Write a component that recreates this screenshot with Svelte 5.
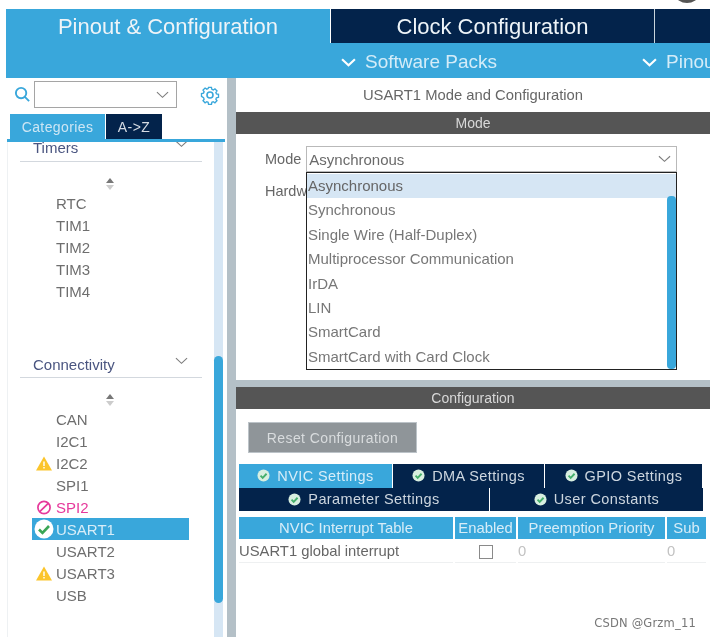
<script>
  const timers = ['RTC', 'TIM1', 'TIM2', 'TIM3', 'TIM4'];
  const connectivity = [
    { name: 'CAN' },
    { name: 'I2C1' },
    { name: 'I2C2', status: 'warn' },
    { name: 'SPI1' },
    { name: 'SPI2', status: 'blocked' },
    { name: 'USART1', status: 'ok' },
    { name: 'USART2' },
    { name: 'USART3', status: 'warn' },
    { name: 'USB' }
  ];
  const modes = [
    'Asynchronous',
    'Synchronous',
    'Single Wire (Half-Duplex)',
    'Multiprocessor Communication',
    'IrDA',
    'LIN',
    'SmartCard',
    'SmartCard with Card Clock'
  ];
</script>

{#snippet chevron(cls)}
  <svg class={cls} viewBox="0 0 14 8" fill="none"><path d="M1 1l6 5.5L13 1" /></svg>
{/snippet}

{#snippet sorter()}
  <svg class="sorter" viewBox="0 0 10 12"><path d="M5 0l4 5H1z" fill="#777" /><path d="M1 7h8l-4 5z" fill="#ccc" /></svg>
{/snippet}

{#snippet tick()}
  <svg class="tick" viewBox="0 0 14 14"><circle cx="7" cy="7" r="6.5" fill="#d8efe0" /><path d="M3.8 7.2l2.3 2.3 4.2-4.4" fill="none" stroke="#46b06c" stroke-width="2" /></svg>
{/snippet}

<div class="page">
  <div class="corner"></div>

  <header>
    <div class="tabs">
      <div class="tab active">Pinout &amp; Configuration</div>
      <div class="tab clock">Clock Configuration</div>
      <div class="tab rest"></div>
    </div>
    <div class="subbar">
      <span class="sub packs">{@render chevron('sub-chev')}Software Packs</span>
      <span class="sub pinout">{@render chevron('sub-chev')}Pinout</span>
    </div>
  </header>

  <main>
    <aside>
      <div class="search">
        <svg class="lens" viewBox="0 0 18 18" fill="none"><circle cx="7.5" cy="7.5" r="5.5" /><path d="M11.5 11.5L16 16" /></svg>
        <div class="searchbox">{@render chevron('chev')}</div>
        <svg class="gear" viewBox="0 0 20 20" fill="none">
          <path d="M8.3 1h3.4l.5 2.4 1.6.7 2-1.3 2.4 2.4-1.3 2 .7 1.6 2.4.5v3.4l-2.4.5-.7 1.6 1.3 2-2.4 2.4-2-1.3-1.6.7-.5 2.4H8.300l-.5-2.400-1.600-.7-2 1.300-2.400-2.400 1.300-2-.7-1.600L0 11.700V8.300l2.400-.5.7-1.600-1.300-2 2.400-2.400 2 1.300 1.600-.7z" transform="translate(1.500 1.500) scale(.85)" />
          <circle cx="10" cy="10" r="3" />
        </svg>
      </div>
      <div class="cat-tabs">
        <div class="cat on">Categories</div>
        <div class="cat off">A-&gt;Z</div>
      </div>
      <div class="cat-line"></div>
      <div class="listwrap">
        <div class="list">
          <div class="group first"><span>Timers</span>{@render chevron('chev')}</div>
          {@render sorter()}
          <ul class="items">
            {#each timers as t}
              <li><span class="ico"></span><span>{t}</span></li>
            {/each}
          </ul>
          <div class="group second"><span>Connectivity</span>{@render chevron('chev')}</div>
          {@render sorter()}
          <ul class="items">
            {#each connectivity as c}
              <li class:selected={c.status === 'ok'} class:blocked={c.status === 'blocked'}>
                <span class="ico">
                  {#if c.status === 'warn'}
                    <svg viewBox="0 0 16 14"><path d="M8 0l8 14H0z" fill="#fbc52c" /><path d="M8 5v4.500M8 10.500v1.500" stroke="#fff" stroke-width="1.400" /></svg>
                  {:else if c.status === 'blocked'}
                    <svg viewBox="0 0 16 16" fill="none" stroke="#e6399b" stroke-width="1.800"><circle cx="8" cy="8" r="6.500" /><path d="M3.500 12.500l9-9" /></svg>
                  {:else if c.status === 'ok'}
                    <svg class="big" viewBox="0 0 20 20"><circle cx="10" cy="10" r="9.500" fill="#fff" /><path d="M5 10.500l3.500 3.500L15 7" fill="none" stroke="#3aa655" stroke-width="2.600" /></svg>
                  {/if}
                </span>
                <span>{c.name}</span>
              </li>
            {/each}
          </ul>
        </div>
        <div class="track"><div class="thumb"></div></div>
      </div>
    </aside>

    <div class="divider"></div>

    <section class="right">
      <div class="title">USART1 Mode and Configuration</div>
      <div class="bar">Mode</div>
      <div class="mode-panel">
        <div class="field">
          <span class="label">Mode</span>
          <div class="select"><span>Asynchronous</span>{@render chevron('chev')}</div>
        </div>
        <div class="field hw"><span class="label">Hardw</span></div>
        <div class="dropdown">
          <ul>
            {#each modes as m, i}
              <li class:hover={i === 0}>{m}</li>
            {/each}
          </ul>
          <div class="dd-thumb"></div>
        </div>
      </div>
      <div class="gap"></div>
      <div class="bar">Configuration</div>
      <div class="config">
        <button class="reset" type="button">Reset Configuration</button>
        <div class="set-row">
          <div class="set on w1">{@render tick()}NVIC Settings</div>
          <div class="set w2">{@render tick()}DMA Settings</div>
          <div class="set w3">{@render tick()}GPIO Settings</div>
        </div>
        <div class="set-row">
          <div class="set w4">{@render tick()}Parameter Settings</div>
          <div class="set w5">{@render tick()}User Constants</div>
        </div>
        <table>
          <thead>
            <tr>
              <th class="c1">NVIC Interrupt Table</th>
              <th class="c2">Enabled</th>
              <th class="c3">Preemption Priority</th>
              <th class="c4">Sub</th>
            </tr>
          </thead>
          <tbody>
            <tr>
              <td class="name">USART1 global interrupt</td>
              <td class="center"><span class="check"></span></td>
              <td class="zero">0</td>
              <td class="zero">0</td>
            </tr>
          </tbody>
        </table>
        <div class="mark">CSDN @Grzm_11</div>
      </div>
    </section>
  </main>
</div>

<style>
  :global(body) {
    margin: 0;
    background: #fff;
  }

  .page {
    position: relative;
    width: 710px;
    height: 637px;
    overflow: hidden;
    padding-top: 9px;
    box-sizing: border-box;
    font-family: "Liberation Sans", Arial, sans-serif;
    color: #666;
    background: #fff;
    filter: blur(0.4px);
  }

  .corner {
    position: absolute;
    top: -12px;
    left: 676px;
    width: 22px;
    height: 15px;
    border-radius: 50%;
    background: #555;
  }

  header {
    margin-left: 6px;
  }

  .tabs {
    display: flex;
    height: 34px;
  }

  .tab {
    display: flex;
    align-items: center;
    justify-content: center;
    font-size: 22px;
    color: #eef4f8;
    box-sizing: border-box;
    padding-top: 2px;
  }

  .active {
    width: 324px;
    background: #39a7db;
  }

  .clock {
    width: 324px;
    margin-left: 1px;
    border-right: 1px solid #c9d4dc;
    background: #03234b;
  }

  .rest {
    flex: 1;
    background: #03234b;
  }

  .subbar {
    display: flex;
    height: 35px;
    box-sizing: border-box;
    padding: 3px 0 0 335px;
    align-items: center;
    background: #39a7db;
    font-size: 19px;
    color: #d4ecf8;
  }

  .sub {
    display: flex;
    align-items: center;
    white-space: nowrap;
  }

  .packs {
    width: 301px;
    flex: none;
  }

  .sub-chev {
    width: 15px;
    height: 9px;
    margin-right: 9px;
    stroke: #fff;
    stroke-width: 2;
    flex: none;
  }

  main {
    display: flex;
    height: 559px;
  }

  aside {
    width: 227px;
    flex: none;
    box-sizing: border-box;
    padding-left: 7px;
    display: flex;
    flex-direction: column;
  }

  .search {
    display: flex;
    align-items: center;
    height: 33px;
    padding-left: 7px;
  }

  .lens {
    width: 17px;
    height: 17px;
    margin-right: 3px;
    stroke: #39a7db;
    stroke-width: 2;
  }

  .searchbox {
    width: 143px;
    height: 27px;
    box-sizing: border-box;
    border: 1px solid #a5a5a5;
    background: #fff;
    display: flex;
    align-items: center;
    justify-content: flex-end;
    padding-right: 7px;
  }

  .chev {
    width: 13px;
    height: 8px;
    stroke: #7d7d7d;
    stroke-width: 1.2;
    flex: none;
  }

  .gear {
    width: 20px;
    height: 20px;
    margin-left: 23px;
    stroke: #39a7db;
    stroke-width: 1.600;
  }

  .cat-tabs {
    display: flex;
    height: 25px;
    margin: 3px 0 0 3px;
  }

  .cat {
    display: flex;
    align-items: center;
    justify-content: center;
    font-size: 14px;
    letter-spacing: 0.4px;
    color: #cde6f4;
  }

  .cat.on {
    width: 95px;
    background: #39a7db;
  }

  .cat.off {
    width: 56px;
    margin-left: 1px;
    background: #03234b;
    color: #d5dbe3;
  }

  .cat-line {
    height: 3px;
    background: #39a7db;
    margin-right: 2px;
  }

  .listwrap {
    display: flex;
    flex: 1;
    min-height: 0;
    margin-right: 4px;
    overflow: hidden;
    border-left: 1px solid #eef1f3;
  }

  .list {
    width: 206px;
    flex: none;
    padding-left: 12px;
    box-sizing: border-box;
  }

  .track {
    width: 9px;
    background: #d6e6f4;
  }

  .thumb {
    height: 247px;
    margin-top: 214px;
    border-radius: 5px;
    background: #39a7db;
  }

  .group {
    display: flex;
    justify-content: space-between;
    align-items: center;
    width: 182px;
    box-sizing: border-box;
    padding: 0 14px 0 13px;
    border-bottom: 1px solid #d3d8de;
    font-size: 15px;
    color: #4a5580;
  }

  .group .chev {
    margin-bottom: 6px;
  }

  .group.first {
    height: 28px;
    margin-top: -8px;
    padding-bottom: 1px;
  }

  .group.second {
    height: 27px;
    margin-top: 49px;
  }

  .sorter {
    display: block;
    width: 10px;
    height: 12px;
    margin: 16px 0 0 85px;
  }

  .items {
    list-style: none;
    margin: 2px 0 0;
    padding: 0;
  }

  .items li {
    display: flex;
    align-items: center;
    width: 157px;
    height: 22px;
    margin-left: 12px;
    font-size: 15px;
    color: #6e6e6e;
  }

  .ico {
    width: 22px;
    margin-left: 1px;
    margin-right: 1px;
    display: flex;
    justify-content: center;
  }

  .ico svg {
    width: 16px;
    height: 15px;
  }

  .ico svg.big {
    width: 20px;
    height: 20px;
  }

  .items li.selected {
    background: #39a7db;
    color: #d7edf8;
  }

  .items li.blocked {
    color: #e6399b;
  }

  .divider {
    width: 9px;
    flex: none;
    background: #b4c0c7;
  }

  .right {
    flex: 1;
    min-width: 0;
    display: flex;
    flex-direction: column;
  }

  .title {
    height: 34px;
    line-height: 34px;
    text-align: center;
    font-size: 14.800px;
    color: #666;
  }

  .bar {
    height: 22px;
    line-height: 22px;
    text-align: center;
    background: #555;
    color: #d8d8d8;
    font-size: 14px;
  }

  .mode-panel {
    position: relative;
    height: 246px;
    padding: 12px 0 0 29px;
    box-sizing: border-box;
  }

  .field {
    display: flex;
    align-items: center;
    font-size: 14.500px;
  }

  .label {
    white-space: nowrap;
  }

  .select {
    width: 371px;
    height: 26px;
    margin-left: 5px;
    padding: 0 5px 0 2px;
    box-sizing: border-box;
    border: 1px solid #b9b9b9;
    display: flex;
    align-items: center;
    justify-content: space-between;
    font-size: 15px;
    color: #6a6a6a;
  }

  .hw {
    margin-top: 6px;
    height: 26px;
  }

  .dropdown {
    position: absolute;
    top: 38px;
    left: 70px;
    width: 371px;
    height: 198px;
    box-sizing: border-box;
    border: 1px solid #222;
    background: #fff;
  }

  .dropdown ul {
    list-style: none;
    margin: 0;
    padding: 1px 0 0;
  }

  .dropdown li {
    height: 24.400px;
    line-height: 24px;
    padding-left: 1px;
    font-size: 15px;
    color: #777;
  }

  .dropdown li.hover {
    background: #d6e6f4;
    color: #666;
  }

  .dd-thumb {
    position: absolute;
    right: 0;
    top: 23px;
    bottom: 0;
    width: 9px;
    border-radius: 4px;
    background: #39a7db;
  }

  .gap {
    height: 7px;
    background: #b4c0c7;
  }

  .config {
    position: relative;
    flex: 1;
    padding: 13px 0 0 3px;
  }

  .reset {
    display: block;
    width: 169px;
    height: 31px;
    margin: 0 0 11px 9px;
    border: 1px solid #bcc3c8;
    background: #8f9599;
    color: #d9dcde;
    font: 14px "Liberation Sans", Arial, sans-serif;
    letter-spacing: 0.4px;
  }

  .set-row {
    display: flex;
    height: 23.500px;
    gap: 1px;
  }

  .set {
    display: flex;
    align-items: center;
    justify-content: center;
    background: #03234b;
    color: #cdd6df;
    font-size: 14.500px;
    letter-spacing: 0.4px;
  }

  .set.on {
    background: #39a7db;
    color: #d7edf8;
  }

  .w1 { width: 153px; }
  .w2 { width: 151px; }
  .w3 { width: 157px; }
  .w4 { width: 250px; }
  .w5 { width: 213px; }

  .tick {
    width: 13px;
    height: 13px;
    margin-right: 7px;
    flex: none;
  }

  table {
    width: 471px;
    margin-top: 6px;
    border-collapse: separate;
    border-spacing: 2px 0;
    table-layout: fixed;
    margin-left: -2px;
    font-size: 14.800px;
  }

  th {
    height: 22px;
    padding: 0;
    font-weight: normal;
    background: #39a7db;
    color: #d7edf8;
  }

  .c1 { width: 214px; }
  .c2 { width: 61px; }
  .c3 { width: 147px; }

  td {
    height: 23px;
    padding: 0;
    border-bottom: 1px solid #eef0f1;
  }

  .name {
    color: #666;
  }

  .center {
    text-align: center;
  }

  .check {
    display: inline-block;
    width: 12px;
    height: 12px;
    border: 1px solid #8a8a8a;
    vertical-align: middle;
  }

  .zero {
    color: #c2c2c2;
  }

  .mark {
    position: absolute;
    right: 14px;
    bottom: 7px;
    font: 11.500px "DejaVu Sans", sans-serif;
    letter-spacing: 0.2px;
    color: #777;
  }
</style>
